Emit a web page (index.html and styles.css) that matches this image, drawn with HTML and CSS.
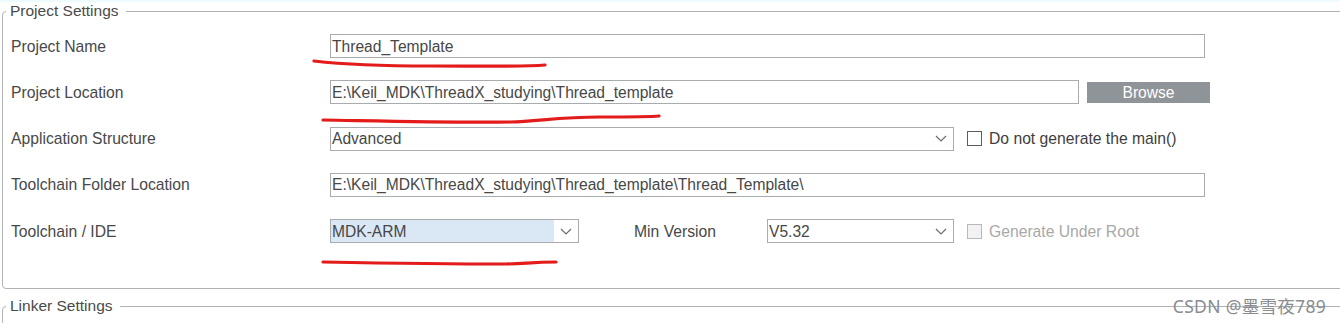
FILE: index.html
```html
<!DOCTYPE html>
<html>
<head>
<meta charset="utf-8">
<link rel="stylesheet" href="styles.css">
</head>
<body>
<div class="tint"></div>
<fieldset class="group">
  <legend>Project Settings</legend>
  <div class="row">
    <span class="label">Project Name</span>
    <div class="field w-long">Thread_Template</div>
  </div>
  <div class="row">
    <span class="label">Project Location</span>
    <div class="field w-loc">E:\Keil_MDK\ThreadX_studying\Thread_template</div>
    <div class="btn">Browse</div>
  </div>
  <div class="row">
    <span class="label">Application Structure</span>
    <div class="field select w-app"><span class="val">Advanced</span><span class="arrow"><svg width="12" height="7" viewBox="0 0 12 7"><path d="M1 1 L6 6 L11 1" fill="none" stroke="#6d6d6d" stroke-width="1.2"/></svg></span></div>
    <span class="check"></span>
    <span class="clabel">Do not generate the main()</span>
  </div>
  <div class="row">
    <span class="label">Toolchain Folder Location</span>
    <div class="field w-long">E:\Keil_MDK\ThreadX_studying\Thread_template\Thread_Template\</div>
  </div>
  <div class="row">
    <span class="label">Toolchain / IDE</span>
    <div class="field select w-ide"><span class="val sel">MDK-ARM</span><span class="arrow"><svg width="12" height="7" viewBox="0 0 12 7"><path d="M1 1 L6 6 L11 1" fill="none" stroke="#6d6d6d" stroke-width="1.2"/></svg></span></div>
    <span class="label2">Min Version</span>
    <div class="field select w-ver"><span class="val">V5.32</span><span class="arrow"><svg width="12" height="7" viewBox="0 0 12 7"><path d="M1 1 L6 6 L11 1" fill="none" stroke="#6d6d6d" stroke-width="1.2"/></svg></span></div>
    <span class="check disabled"></span>
    <span class="clabel dis">Generate Under Root</span>
  </div>
</fieldset>
<fieldset class="group group2">
  <legend>Linker Settings</legend>
</fieldset>
<svg class="marks" width="1340" height="323" viewBox="0 0 1340 323">
  <path d="M314 61 C 340 64, 380 66, 430 66 S 520 67, 545 65" fill="none" stroke="#e41b1b" stroke-width="3.2" stroke-linecap="round"/>
  <path d="M323 120 C 380 121, 460 123, 510 122 C 540 121, 560 117, 600 117 S 650 117, 659 116" fill="none" stroke="#e41b1b" stroke-width="3.2" stroke-linecap="round"/>
  <path d="M323 262 C 380 263, 440 264, 505 264 C 525 264, 530 262, 556 262" fill="none" stroke="#e41b1b" stroke-width="3.2" stroke-linecap="round"/>
</svg>
<div class="watermark">CSDN @墨雪夜789</div>
</body>
</html>
```

FILE: styles.css
```css
html, body {
  margin: 0;
  padding: 0;
  background: #ffffff;
  overflow: hidden;
  width: 1340px;
  height: 323px;
  position: relative;
  font-family: "Liberation Sans", Arial, sans-serif;
  font-size: 15.7px;
  color: #454545;
}

.tint {
  height: 2px;
  background: #eefbfc;
}

.group {
  margin: 0 0 0 2px;
  width: 1360px;
  border: 1px solid #b0b3b6;
  border-radius: 4px;
  padding: 14px 0 45px 8px;
  box-sizing: border-box;
}

.group legend {
  padding: 0 7px 0 4px;
  margin-left: -5px;
  line-height: 18px;
  font-size: 15.5px;
  color: #4a4a4a;
}

.group2 {
  margin-top: 8px;
  height: 30px;
  padding: 0 0 0 8px;
}

.row {
  display: flex;
  align-items: center;
  height: 24px;
  margin-bottom: 22.25px;
}

.row:last-child {
  margin-bottom: 0;
}

.label {
  width: 319px;
  flex: none;
  color: #484848;
  padding-top: 1px;
}

.field {
  height: 24px;
  box-sizing: border-box;
  border: 1px solid #a9acaf;
  display: flex;
  align-items: center;
  padding: 1px 0 0 1px;
  color: #474747;
  white-space: nowrap;
  flex: none;
  background: #fff;
  font-size: 15.6px;
}

.w-long { width: 875px; }
.w-loc { width: 749px; }
.w-app { width: 624px; }
.w-ide { width: 249px; }
.w-ver { width: 187px; }

.select {
  padding: 0;
}

.select .val {
  flex: 1;
  height: 100%;
  display: flex;
  align-items: center;
  padding: 1px 0 0 1px;
  box-sizing: border-box;
}

.select .val.sel {
  background: #dae8f5;
}

.arrow {
  width: 24px;
  display: flex;
  align-items: center;
  justify-content: center;
  flex: none;
}

.btn {
  margin-left: 8px;
  width: 123px;
  height: 21px;
  background: #8f9499;
  color: #ffffff;
  display: flex;
  align-items: center;
  justify-content: center;
  font-size: 15.6px;
  flex: none;
  padding-top: 1px;
  box-sizing: border-box;
}

.check {
  margin-left: 13px;
  width: 15px;
  height: 15px;
  box-sizing: border-box;
  border: 1px solid #5c5c5c;
  background: #fff;
  flex: none;
}

.check.disabled {
  border-color: #b8b8b8;
  background: #f2f2f2;
}

.clabel {
  margin-left: 7px;
  color: #3e3e3e;
  padding-top: 1px;
}

.clabel.dis {
  color: #a8a8a8;
}

.label2 {
  margin-left: 55px;
  width: 133px;
  flex: none;
  color: #484848;
  padding-top: 1px;
}

.marks {
  position: absolute;
  left: 0;
  top: 0;
  pointer-events: none;
}

.watermark {
  position: absolute;
  right: 14px;
  top: 293px;
  font-family: "Noto Sans", "Noto Sans CJK SC", sans-serif;
  font-size: 17.5px;
  color: #8a8c8f;
  letter-spacing: 0.3px;
}
```
